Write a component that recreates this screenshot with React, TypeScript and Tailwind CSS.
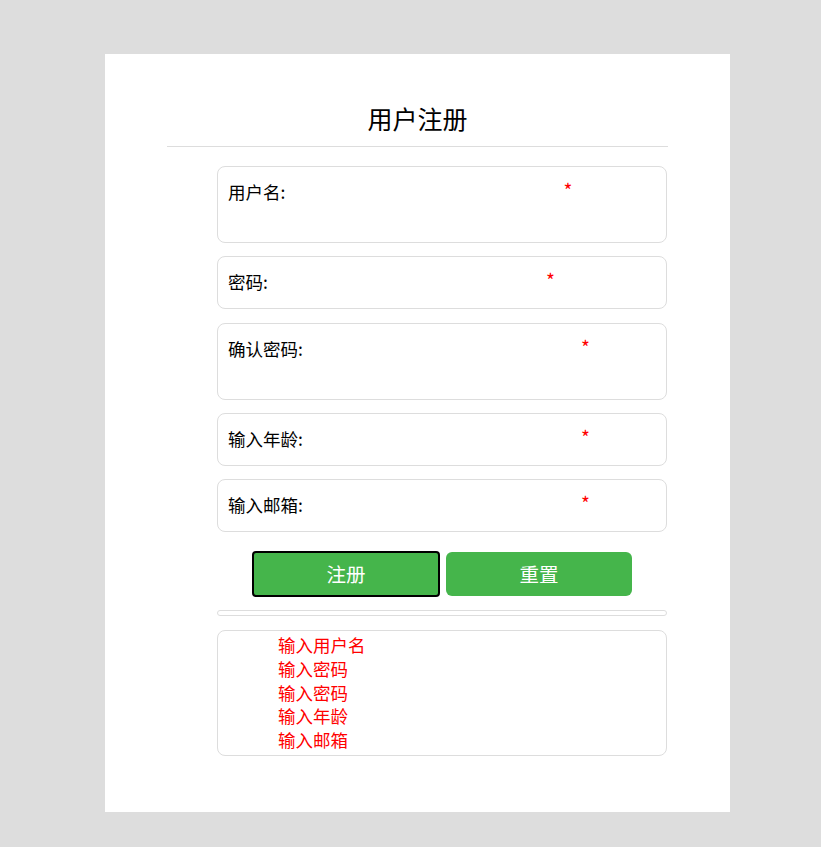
import React from "react";

const font = { fontFamily: '"Noto Sans CJK SC", "Noto Sans", sans-serif' };

function Field({ label, tall, mt }: { label: string; tall?: boolean; mt: string }) {
  return (
    <div
      className={`${tall ? "h-[77px]" : "h-[53px]"} ${mt} border border-[#dddddd] rounded-[8px] pt-[13px] pl-[10px]`}
    >
      <div className="flex items-start text-[17.5px] leading-[24px] text-black">
        <span>{label}</span>
        <span className="w-[278px] shrink-0" />
        <span className="text-[#ff0000] text-[19px] leading-[20px]">*</span>
      </div>
    </div>
  );
}

export default function App() {
  return (
    <div className="min-h-screen bg-[#dddddd] pt-[54px] pl-[105px] pb-[35px]" style={font}>
      <div className="w-[625px] h-[758px] bg-white pt-[47px]">
        <h1 className="text-[25px] leading-[34px] text-center text-black">用户注册</h1>
        <div className="mx-[62px] mt-[11px] border-t border-[#dddddd]" />
        <div className="ml-[112px] w-[450px] mt-[19px] flex flex-col">
          <Field label="用户名:" tall mt="mt-0" />
          <Field label="密码:" mt="mt-[13px]" />
          <Field label="确认密码:" tall mt="mt-[14px]" />
          <Field label="输入年龄:" mt="mt-[13px]" />
          <Field label="输入邮箱:" mt="mt-[13px]" />
          <div className="mt-[19px] flex justify-center items-center gap-[6px]">
            <button className="w-[188px] h-[46px] border-2 border-black rounded-[4px] bg-[#45b54b] text-white text-[19.5px]">
              注册
            </button>
            <button className="w-[186px] h-[44px] rounded-[6px] bg-[#45b54b] text-white text-[19.5px]">
              重置
            </button>
          </div>
          <div className="mt-[13px] h-[6px] border border-[#dddddd] rounded-[3px]" />
          <div className="mt-[14px] h-[126px] border border-[#dddddd] rounded-[8px] pt-[2px] pl-[60px] text-[#ff0000] text-[17.5px] leading-[23.8px]">
            <div>输入用户名</div>
            <div>输入密码</div>
            <div>输入密码</div>
            <div>输入年龄</div>
            <div>输入邮箱</div>
          </div>
        </div>
      </div>
    </div>
  );
}
